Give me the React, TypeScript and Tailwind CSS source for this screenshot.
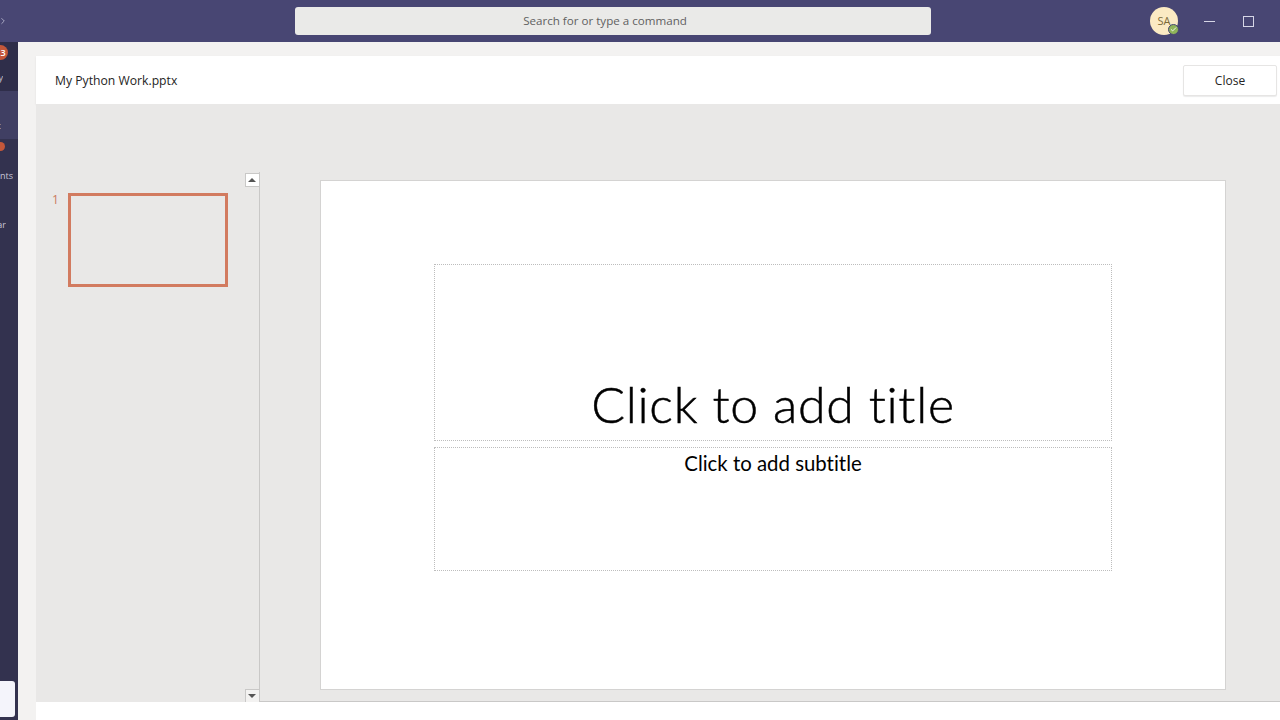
import { Check, ChevronRight } from 'lucide-react';

function SideItem({ label, className }: { label: string; className: string }) {
  return (
    <div className={`flex justify-end overflow-hidden whitespace-nowrap text-[9px] leading-[12px] text-[#c8c6d8] ${className}`}>
      {label}
    </div>
  );
}

export default function App() {
  return (
    <div className="flex h-[720px] w-[1280px] flex-col overflow-hidden bg-[#f3f2f1] font-['Open_Sans',sans-serif]">
      {/* Title bar */}
      <header className="flex h-[42px] shrink-0 items-center bg-[#484673]">
        <div className="w-[295px] shrink-0">
          <ChevronRight className="-ml-[2px] h-[10px] w-[10px] text-[#b9b8d0]" />
        </div>
        <div className="flex h-[28px] w-[636px] items-center justify-center rounded-[3px] bg-[#eaeae8] pr-[16px] text-[11.6px] text-[#616161]">
          Search for or type a command
        </div>
        <div className="ml-[219px] flex items-center">
          <div className="relative flex h-[28px] w-[28px] items-center justify-center rounded-full bg-[#fbeac3] text-[11px] text-[#7c6a3a]">
            SA
            <span className="absolute -right-[1px] bottom-0 flex h-[11px] w-[11px] items-center justify-center rounded-full border border-[#484673] bg-[#8fb45a]">
              <Check className="h-[7px] w-[7px] text-white" strokeWidth={3} />
            </span>
          </div>
          <div className="ml-[26px] h-px w-[11px] bg-[#d6d6e6]" />
          <div className="ml-[28px] h-[11px] w-[11px] border border-[#d6d6e6]" />
        </div>
      </header>

      <div className="flex min-h-0 flex-1">
        {/* Clipped left rail */}
        <aside className="flex w-[18px] shrink-0 flex-col bg-[#33324f]">
          <div className="h-[49px] bg-[#2f2e4a] pt-[3px]">
            <div className="-ml-[7px] flex h-[15px] w-[15px] items-center justify-center rounded-full bg-[#c4573a] pl-[5px] text-[9px] font-semibold text-white">
              3
            </div>
            <SideItem label="Activity" className="mr-[15px] mt-[12px]" />
          </div>
          <div className="h-[48px] bg-[#403f63] pt-[29px]">
            <SideItem label="Chat" className="mr-[17px]" />
          </div>
          <div className="-ml-[4px] mt-[3px] h-[9px] w-[9px] rounded-full bg-[#c4573a]" />
          <SideItem label="Assignments" className="mr-[5px] mt-[19px]" />
          <SideItem label="Calendar" className="mr-[12px] mt-[37px]" />
          <div className="mt-[450px] h-[36px] w-[15px] rounded-r-[3px] bg-[#f4f4fb]" />
        </aside>

        {/* Viewer */}
        <main className="flex min-w-0 flex-1 flex-col pl-[18px] pt-[14px]">
          <div className="flex h-[48px] shrink-0 items-center justify-between bg-white pl-[19px] shadow-[0_1px_2px_rgba(0,0,0,0.08)]">
            <span className="pt-[2px] text-[12.2px] font-normal text-[#252423]">My Python Work.pptx</span>
            <button className="mr-[3px] mt-[1px] flex h-[31px] w-[94px] items-center justify-center rounded-[2px] border border-[#e6e5e4] bg-white pt-[1px] text-[12px] text-[#252423] shadow-[0_1px_1px_rgba(0,0,0,0.08)]">
              Close
            </button>
          </div>

          <div className="flex h-[598px] shrink-0 bg-[#e9e8e7] pt-[68px]">
            {/* Thumbnail rail */}
            <div className="flex w-[224px] shrink-0 justify-between">
              <div className="flex pl-[16px] pt-[21px]">
                <span className="w-[16px] text-[12px] leading-[14px] text-[#c97b5f]">1</span>
                <div className="h-[94px] w-[160px] border-[3px] border-[#d27b60]" />
              </div>
              <div className="flex w-[15px] flex-col items-center border-r border-[#c9c8c7] pt-[1px]">
                <div className="flex h-[14px] w-[15px] shrink-0 items-center justify-center border border-[#c9c8c7] bg-white">
                  <span className="h-0 w-0 border-x-[4px] border-b-[4px] border-x-transparent border-b-[#555]" />
                </div>
                <div className="flex-1" />
                <div className="mb-[-1px] flex h-[14px] w-[15px] shrink-0 items-center justify-center border border-[#c9c8c7] bg-[#f3f2f1]">
                  <span className="h-0 w-0 border-x-[4px] border-t-[4px] border-x-transparent border-t-[#555]" />
                </div>
              </div>
            </div>

            {/* Slide stage */}
            <div className="flex-1 border-b border-[#c9c8c7] pl-[60px] pt-[8px]">
              <div className="flex h-[510px] w-[906px] flex-col items-center border border-[#d4d3d2] bg-white pt-[83px] font-['Lato',sans-serif] [font-variant-ligatures:none]">
                <div className="flex h-[177px] w-[678px] items-end justify-center border border-dotted border-[#bdbdbd] text-[50px] font-light leading-[72px] tracking-[0.7px] text-black [-webkit-text-stroke:0.5px_black]">
                  Click to add title
                </div>
                <div className="mt-[6px] flex h-[124px] w-[678px] justify-center border border-dotted border-[#bdbdbd] text-[20.4px] leading-[30px] text-black">
                  Click to add subtitle
                </div>
              </div>
            </div>
          </div>

          <div className="flex-1 bg-white" />
        </main>
      </div>
    </div>
  );
}
